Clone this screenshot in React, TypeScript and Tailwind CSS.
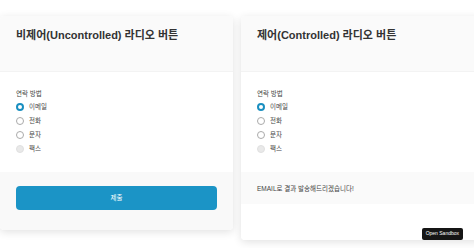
const font = { fontFamily: '"Liberation Sans", "Noto Sans CJK KR", sans-serif' };

type Option = { label: string; checked?: boolean; disabled?: boolean };

const options: Option[] = [
  { label: "이메일", checked: true },
  { label: "전화" },
  { label: "문자" },
  { label: "팩스", disabled: true },
];

function Radio({ checked, disabled }: { checked?: boolean; disabled?: boolean }) {
  if (checked) {
    return <span className="w-[8px] h-[8px] rounded-full border-[2.5px] border-[#1a8fc0] bg-white" />;
  }
  if (disabled) {
    return <span className="w-[8px] h-[8px] rounded-full border border-[#e0e0e0] bg-[#e9e9e9]" />;
  }
  return <span className="w-[8px] h-[8px] rounded-full border border-[#aaaaaa] bg-white" />;
}

function Fieldset() {
  return (
    <div className="px-4 pt-[16px] pb-[16px] bg-white">
      <div className="h-[12px] leading-[12px] text-[6.5px] text-[#444]">연락 방법</div>
      {options.map((o) => (
        <div key={o.label} className="h-[14px] flex items-center gap-[5px]">
          <Radio checked={o.checked} disabled={o.disabled} />
          <span className="text-[6.5px] text-[#444]">{o.label}</span>
        </div>
      ))}
    </div>
  );
}

function Header({ title }: { title: string }) {
  return (
    <div className="h-[56px] bg-[#fafafa] px-4 pt-[12px] border-b border-[#f3f3f3]">
      <h2 className="text-[11px] leading-[14px] font-bold text-[#333]">{title}</h2>
    </div>
  );
}

export default function App() {
  return (
    <div className="relative h-screen overflow-hidden bg-white" style={font}>
      <div className="flex items-start gap-2 pt-4">
        {/* uncontrolled */}
        <div className="w-[233px] shrink-0 bg-white rounded-sm shadow-[0_2px_8px_rgba(0,0,0,0.12)] overflow-hidden">
          <Header title="비제어(Uncontrolled) 라디오 버튼" />
          <Fieldset />
          <div className="bg-[#f9f9f9] px-4 pt-[11px] pb-[20px]">
            <button className="w-full h-[24px] rounded-sm bg-[#1b94c6] text-white text-[6.5px]">
              제출
            </button>
          </div>
        </div>

        {/* controlled */}
        <div className="w-[240px] shrink-0 bg-white rounded-sm shadow-[0_2px_8px_rgba(0,0,0,0.12)] overflow-hidden">
          <Header title="제어(Controlled) 라디오 버튼" />
          <Fieldset />
          <div className="h-[32px] bg-[#fafafa] px-4 flex items-center pt-[2px]">
            <span className="text-[6.5px] text-[#444]">EMAIL로 결과 발송해드리겠습니다!</span>
          </div>
          <div className="h-[36px] bg-white" />
        </div>
      </div>

      <button className="absolute right-[11px] bottom-[8px] h-[12px] px-[4px] rounded-[2px] bg-[#151515] text-white text-[5px]">
        Open Sandbox
      </button>
    </div>
  );
}
